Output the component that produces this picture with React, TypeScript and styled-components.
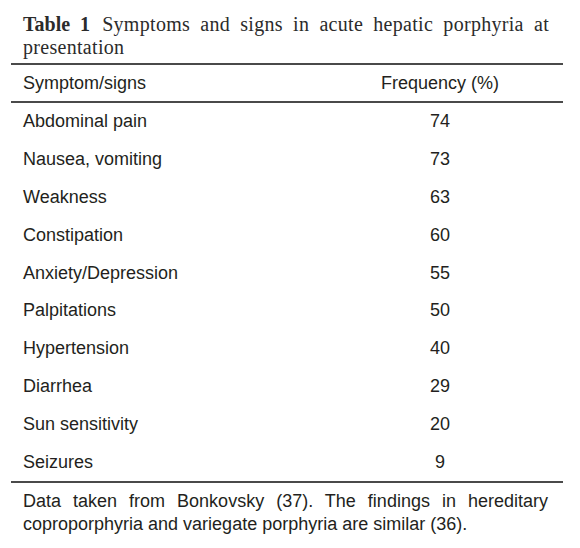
import React from "react";
import styled, { createGlobalStyle } from "styled-components";

interface ISymptom {
  name: string;
  freq: number;
}

const GlobalStyle = createGlobalStyle`
  body {
    margin: 0;
    background: #fff;
  }
`;

const Wrapper = styled.div`
  width: 552px;
  margin-left: 11px;
  color: #231f20;
`;

const Caption = styled.div`
  margin-bottom: 4px;
  padding: 13px 14px 0 12px;
  font-family: "Liberation Serif", "DejaVu Serif", serif;
  font-size: 20px;
  line-height: 23px;
  letter-spacing: 0.3px;
  text-align: justify;
  color: #2b2b2b;
`;

const Label = styled.b`
  font-weight: 700;
  letter-spacing: 0;
  margin-right: 2px;
`;

const Rule = styled.div`
  height: 2px;
  background: #4a4a4a;
`;

const Row = styled.div<{ $head?: boolean }>`
  display: grid;
  grid-template-columns: 1fr 160px;
  align-items: center;
  height: ${(p) => (p.$head ? "36px" : "37.8px")};
  padding: 0 43px 0 12px;
  font-family: "Liberation Sans", Arial, sans-serif;
  font-size: 18px;
  color: #231f20;
`;

const Freq = styled.span`
  text-align: center;
`;

const Note = styled.p`
  margin: 7px 0 0;
  padding: 0 15px 0 12px;
  font-family: "Liberation Sans", Arial, sans-serif;
  font-size: 18px;
  line-height: 23px;
  text-align: justify;
  color: #231f20;
`;

const symptoms: ISymptom[] = [
  { name: "Abdominal pain", freq: 74 },
  { name: "Nausea, vomiting", freq: 73 },
  { name: "Weakness", freq: 63 },
  { name: "Constipation", freq: 60 },
  { name: "Anxiety/Depression", freq: 55 },
  { name: "Palpitations", freq: 50 },
  { name: "Hypertension", freq: 40 },
  { name: "Diarrhea", freq: 29 },
  { name: "Sun sensitivity", freq: 20 },
  { name: "Seizures", freq: 9 },
];

function App() {
  return (
    <>
      <GlobalStyle />
      <Wrapper>
        <Caption>
          <Label>Table 1</Label> Symptoms and signs in acute hepatic porphyria at
          presentation
        </Caption>
        <Rule />
        <Row $head>
          <span>Symptom/signs</span>
          <Freq>Frequency (%)</Freq>
        </Row>
        <Rule />
        {symptoms.map((s) => (
          <Row key={s.name}>
            <span>{s.name}</span>
            <Freq>{s.freq}</Freq>
          </Row>
        ))}
        <Rule />
        <Note>
          Data taken from Bonkovsky (37). The findings in hereditary
          coproporphyria and variegate porphyria are similar (36).
        </Note>
      </Wrapper>
    </>
  );
}

export default App;
